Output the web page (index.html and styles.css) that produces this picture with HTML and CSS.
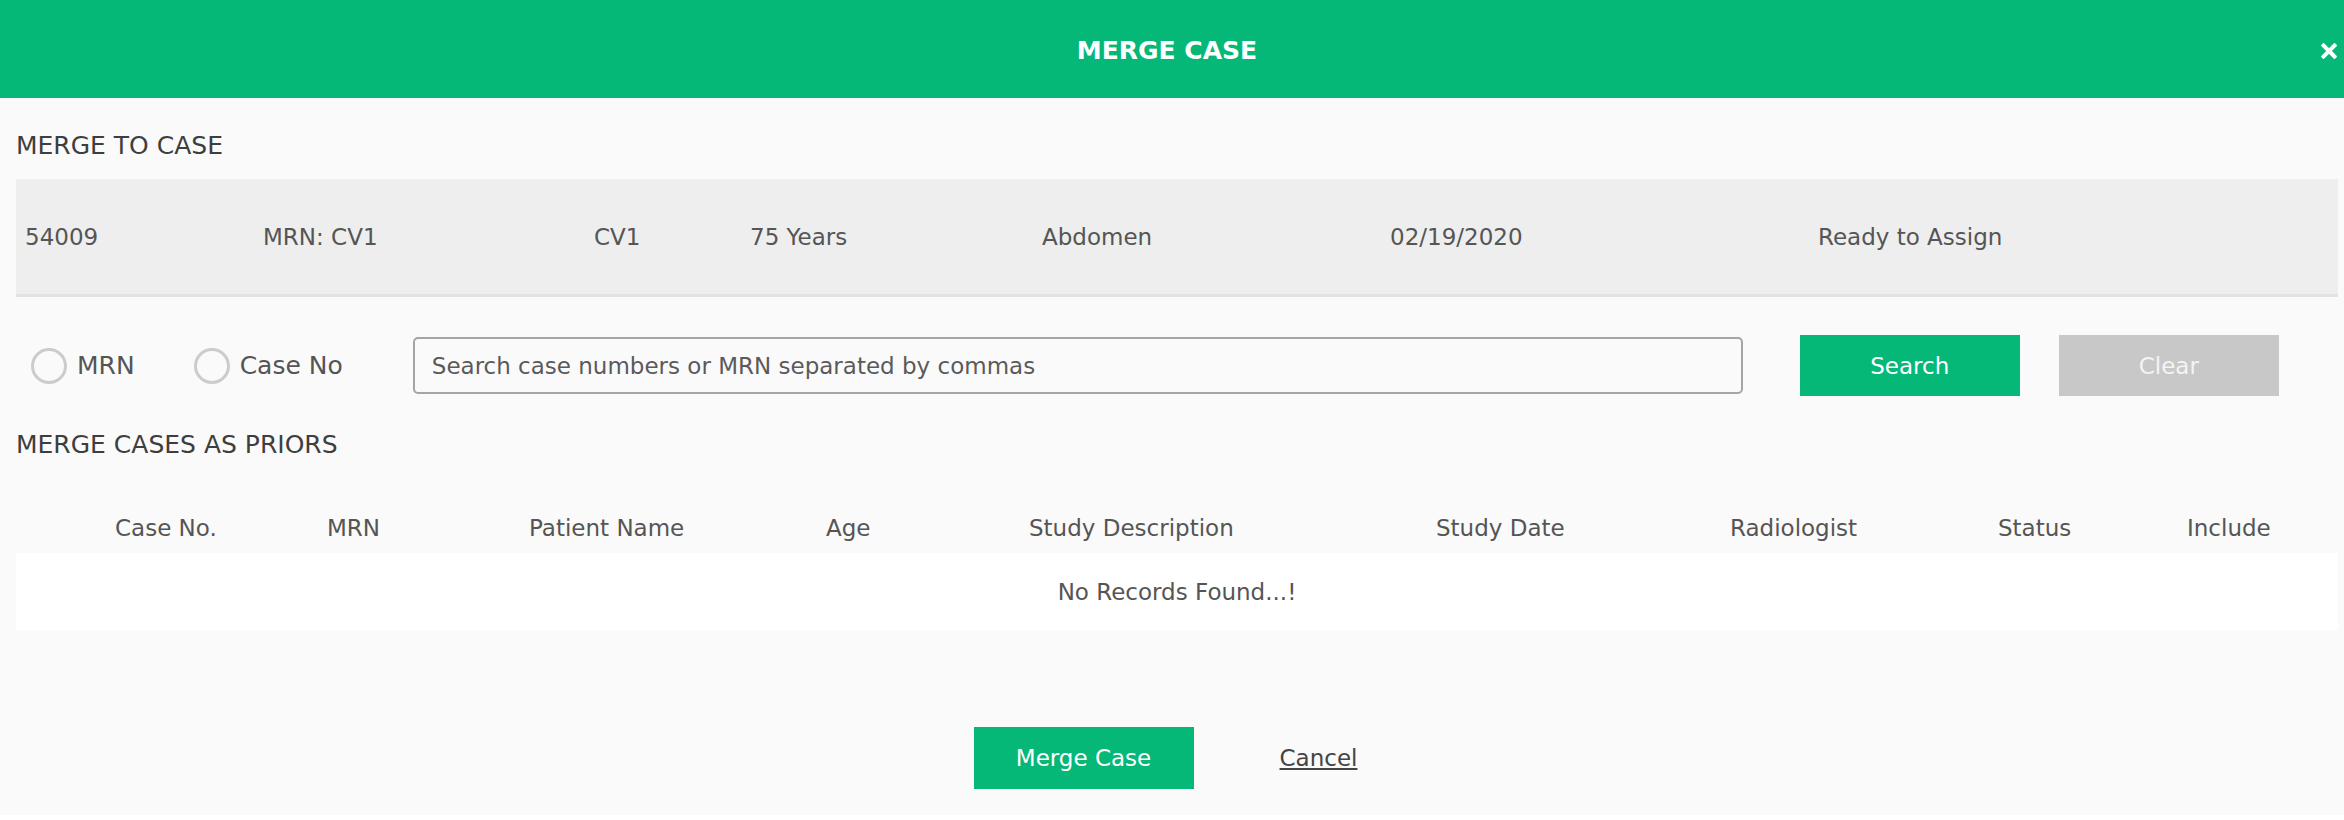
FILE: index.html
```html
<!DOCTYPE html>
<html>
<head>
    <title>Merge Case</title>
    <link rel="stylesheet" href="styles.css">
</head>
<body>
    <div class="modal">
        <div class="modal-header">
            <h1>MERGE CASE</h1>
            <button class="close" aria-label="Close">
                <svg width="16" height="16" viewBox="0 0 16 16">
                    <path d="M2.5 2.5 L13.5 13.5 M13.5 2.5 L2.5 13.5" stroke="#fff" stroke-width="4" stroke-linecap="square" fill="none"/>
                </svg>
            </button>
        </div>

        <div class="modal-body">
            <h2 class="section-title">MERGE TO CASE</h2>
            <div class="case-summary">
                <span>54009</span>
                <span>MRN: CV1</span>
                <span>CV1</span>
                <span>75 Years</span>
                <span>Abdomen</span>
                <span>02/19/2020</span>
                <span>Ready to Assign</span>
            </div>

            <div class="search-row">
                <label class="radio"><input type="radio" name="searchBy" value="mrn"> MRN</label>
                <label class="radio"><input type="radio" name="searchBy" value="case"> Case No</label>
                <input type="text" class="search-input" placeholder="Search case numbers or MRN separated by commas">
                <button class="btn btn-green">Search</button>
                <button class="btn btn-gray">Clear</button>
            </div>

            <h2 class="section-title titled-priors">MERGE CASES AS PRIORS</h2>
            <table class="priors">
                <colgroup>
                    <col class="c-case"><col class="c-mrn"><col class="c-name"><col class="c-age"><col class="c-desc">
                    <col class="c-date"><col class="c-rad"><col class="c-status"><col class="c-inc">
                </colgroup>
                <thead>
                    <tr>
                        <th class="first">Case No.</th>
                        <th>MRN</th>
                        <th>Patient Name</th>
                        <th>Age</th>
                        <th>Study Description</th>
                        <th>Study Date</th>
                        <th>Radiologist</th>
                        <th>Status</th>
                        <th>Include</th>
                    </tr>
                </thead>
                <tbody>
                    <tr><td colspan="9" class="empty">No Records Found...!</td></tr>
                </tbody>
            </table>

            <div class="actions">
                <button class="btn btn-green btn-merge">Merge Case</button>
                <a href="#" class="cancel">Cancel</a>
            </div>
        </div>
    </div>
</body>
</html>
```

FILE: styles.css
```css
html {
    background-color: #fff;
}
body {
    margin: 0;
    font-family: 'DejaVu Sans', sans-serif;
    color: #555;
}
.modal {
    background-color: #fafafa;
}
.modal-header {
    position: relative;
    box-sizing: border-box;
    height: 98px;
    padding-top: 3px;
    background-color: #05b877;
    display: flex;
    align-items: center;
    justify-content: center;
}
.modal-header h1 {
    margin: 0 10px 0 0;
    color: #fff;
    font-size: 25px;
    font-weight: bold;
}
.close {
    position: absolute;
    top: 43px;
    right: 7px;
    width: 16px;
    height: 16px;
    padding: 0;
    border: none;
    background: none;
    cursor: pointer;
}
.close svg {
    display: block;
}
.modal-body {
    padding: 0 6px 26px 16px;
}
.section-title {
    margin: 33px 0 0 0;
    font-size: 25px;
    line-height: 30px;
    font-weight: normal;
    color: #3e3e3e;
}
.titled-priors {
    margin-top: 34px;
}
.case-summary {
    margin-top: 18px;
    height: 115px;
    display: grid;
    grid-template-columns: 238px 331px 156px 292px 348px 428px 1fr;
    align-items: center;
    padding-left: 9px;
    background-color: #eeeeee;
    border-bottom: 3px solid #e2e2e2;
    font-size: 23px;
    color: #555;
}
.search-row {
    margin-top: 38px;
    height: 61px;
    display: flex;
    align-items: center;
}
.radio {
    display: flex;
    align-items: center;
    font-size: 25px;
    color: #555;
}
.radio input {
    appearance: none;
    -webkit-appearance: none;
    width: 36px;
    height: 36px;
    margin: 0 10px 0 0;
    border: 3px solid #cccccc;
    border-radius: 50%;
    background-color: #fafafa;
}
.radio:first-child {
    margin-left: 15px;
    margin-right: 59px;
}
.search-input {
    box-sizing: border-box;
    width: 1330px;
    height: 57px;
    margin-left: 70px;
    padding: 0 17px;
    border: 2px solid #a5a5a5;
    border-radius: 5px;
    background-color: #fafafa;
    font-family: 'DejaVu Sans', sans-serif;
    font-size: 23px;
    color: #555;
}
.search-input::placeholder {
    color: #5a5a5a;
}
.btn {
    box-sizing: border-box;
    width: 220px;
    height: 61px;
    border: none;
    font-family: 'DejaVu Sans', sans-serif;
    font-size: 23px;
    color: #fff;
    cursor: pointer;
}
.btn-green {
    background-color: #05b877;
    margin-left: 57px;
}
.btn-gray {
    background-color: #c8c8c8;
    color: #f4f4f4;
    margin-left: 39px;
}
.priors {
    width: 100%;
    margin-top: 43px;
    border-collapse: collapse;
    table-layout: fixed;
    font-size: 23px;
}
.c-case { width: 311px; }
.c-mrn { width: 202px; }
.c-name { width: 297px; }
.c-age { width: 203px; }
.c-desc { width: 407px; }
.c-date { width: 294px; }
.c-rad { width: 268px; }
.c-status { width: 189px; }
.priors th {
    height: 50px;
    padding: 0;
    text-align: left;
    font-weight: normal;
    color: #555;
}
.priors th.first {
    padding-left: 99px;
}
.priors td.empty {
    height: 77px;
    padding: 0;
    background-color: #fff;
    text-align: center;
    color: #555;
}
.actions {
    margin-top: 97px;
    display: flex;
    justify-content: center;
    align-items: center;
    padding-right: 23px;
}
.btn-merge {
    margin-left: 0;
    height: 62px;
}
.cancel {
    margin-left: 86px;
    font-size: 23px;
    color: #444;
    text-decoration: underline;
}
```
